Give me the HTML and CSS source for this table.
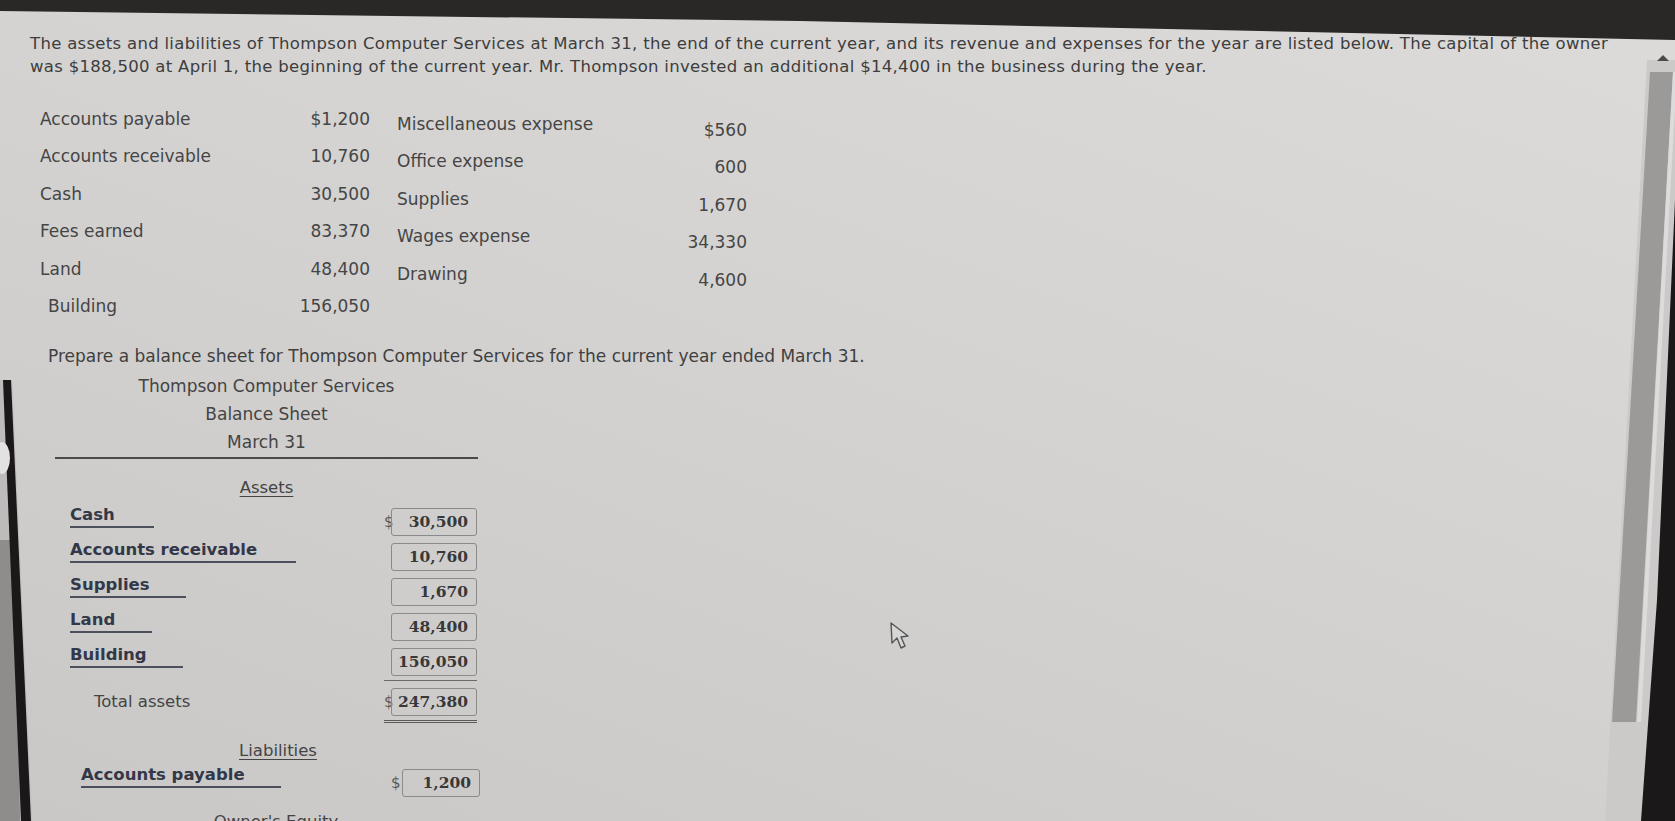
FILE: index.html
```html
<!DOCTYPE html>
<html lang="en">
<head>
<meta charset="utf-8">
<title>Thompson Computer Services - Balance Sheet</title>
<link rel="stylesheet" href="styles.css">
</head>
<body>
<div class="screen">
  <div class="content">
    <p class="intro">The assets and liabilities of Thompson Computer Services at March 31, the end of the current year, and its revenue and expenses for the year are listed below. The capital of the owner<br>was $188,500 at April 1, the beginning of the current year. Mr. Thompson invested an additional $14,400 in the business during the year.</p>

    <div class="data">
      <span class="dl">Accounts payable</span><span class="da">$1,200</span><span class="dl dl2">Miscellaneous expense</span><span class="da da2">$560</span>
      <span class="dl">Accounts receivable</span><span class="da">10,760</span><span class="dl dl2">Office expense</span><span class="da da2">600</span>
      <span class="dl">Cash</span><span class="da">30,500</span><span class="dl dl2">Supplies</span><span class="da da2">1,670</span>
      <span class="dl">Fees earned</span><span class="da">83,370</span><span class="dl dl2">Wages expense</span><span class="da da2">34,330</span>
      <span class="dl">Land</span><span class="da">48,400</span><span class="dl dl2">Drawing</span><span class="da da2">4,600</span>
      <span class="dl dl-b">Building</span><span class="da">156,050</span><span></span><span></span>
    </div>

    <p class="prompt">Prepare a balance sheet for Thompson Computer Services for the current year ended March 31.</p>

    <div class="sheet">
      <div class="sheet-head">
        <div>Thompson Computer Services</div>
        <div>Balance Sheet</div>
        <div>March 31</div>
      </div>

      <div class="sec-title">Assets</div>
      <div class="rows">
        <div class="row"><span class="acct w-cash">Cash</span><span class="cur">$</span><span class="box">30,500</span></div>
        <div class="row"><span class="acct w-ar">Accounts receivable</span><span class="cur"></span><span class="box">10,760</span></div>
        <div class="row"><span class="acct w-sup">Supplies</span><span class="cur"></span><span class="box">1,670</span></div>
        <div class="row"><span class="acct w-land">Land</span><span class="cur"></span><span class="box">48,400</span></div>
        <div class="row"><span class="acct w-bld">Building</span><span class="cur"></span><span class="box">156,050</span></div>
        <div class="row total">
          <span class="total-label">Total assets</span>
          <span class="tot-cell"><span class="cur">$</span><span class="box">247,380</span></span>
        </div>
      </div>

      <div class="liab">
        <div class="sec-title sec-liab">Liabilities</div>
        <div class="row row-ap"><span class="acct w-ap">Accounts payable</span><span class="cur">$</span><span class="box">1,200</span></div>
        <div class="sec-title sec-oe">Owner's Equity</div>
      </div>
    </div>
  </div>

  <svg class="topbar" width="1675" height="42" viewBox="0 0 1675 42" aria-hidden="true">
    <polygon points="0,0 1675,0 1675,40 800,21 0,11" fill="#2a2727"/>
  </svg>

  <svg class="left-edge" width="40" height="821" viewBox="0 0 40 821" aria-hidden="true">
    <polygon points="0,540 15,540 22,821 0,821" fill="#8e8d8c"/>
    <polygon points="0,380 12,380 32,821 20,821 15,540 0,540" fill="#bdbcbb"/>
    <polygon points="3,380 11,380 31,821 21,821" fill="#1c1819"/>
    <ellipse cx="2" cy="458" rx="8" ry="16" fill="#e2e2e2"/>
  </svg>

  <svg class="right-edge" width="90" height="821" viewBox="1585 0 90 821" aria-hidden="true">
    <polygon points="1647,60 1675,60 1675,821 1605,821" fill="#cbcac9"/>
    <polygon points="1650,72 1673,72 1636,722 1612,722" fill="#9b9a99"/>
    <polygon points="1637,722 1641,722 1677,72 1673,72" fill="#dcdcdc"/>
    <polygon points="1657,61 1669,61 1663,55" fill="#4a4a4a"/>
    <polygon points="1675,200 1675,821 1641,821 1657,600" fill="#1b1819"/>
  </svg>

  <svg class="cursor" width="24" height="32" viewBox="0 0 24 32" aria-hidden="true">
    <path d="M2 2 L3 22 L8 17 L12 27 L16 25 L12 16 L19 15 Z" fill="#d6d6d6" stroke="#555" stroke-width="1.4" stroke-linejoin="round"/>
  </svg>
</div>
</body>
</html>
```

FILE: styles.css
```css
* {
  box-sizing: border-box;
}

body {
  margin: 0;
  background: #d2d1d0;
  font-family: "DejaVu Sans", Verdana, sans-serif;
  color: #3f3f3f;
}

.screen {
  position: relative;
  width: 1675px;
  height: 821px;
  overflow: hidden;
  background: linear-gradient(200deg, #dcdbda 0%, #d4d3d2 45%, #c9c8c7 100%);
}

.content {
  padding: 32px 0 0 30px;
}

.intro {
  margin: 0;
  font-size: 16.5px;
  letter-spacing: 0.3px;
  line-height: 23px;
  white-space: nowrap;
  color: #3d3d3d;
}

.data {
  display: grid;
  grid-template-columns: 250px 80px 297px 80px;
  grid-auto-rows: 37.5px;
  align-items: center;
  margin: 22px 0 0 10px;
  font-size: 17px;
  color: #454545;
}

.da {
  text-align: right;
}

.dl2 {
  padding: 10px 0 0 27px;
}

.da2 {
  padding-top: 22px;
}

.dl-b {
  padding-left: 8px;
}

.prompt {
  margin: 20px 0 0 18px;
  font-size: 17px;
  line-height: 22px;
  color: #404040;
}

.sheet {
  width: 423px;
  margin: 5px 0 0 25px;
}

.sheet-head {
  text-align: center;
  font-size: 17px;
  line-height: 28px;
  padding-bottom: 1px;
  border-bottom: 2px solid #4a4a4a;
  color: #444;
}

.sec-title {
  margin-top: 18px;
  text-align: center;
  font-size: 16.5px;
  line-height: 22px;
  text-decoration: underline;
  text-underline-offset: 3px;
  color: #444;
}

.rows {
  margin-top: 5.5px;
}

.row {
  display: grid;
  grid-template-columns: 314px 7px 86px;
  height: 35px;
  align-items: center;
  padding-left: 15px;
}

.acct {
  align-self: start;
  justify-self: start;
  font-weight: bold;
  font-size: 16.5px;
  line-height: 19px;
  padding-bottom: 2px;
  border-bottom: 2px solid #4b505c;
  color: #333849;
  white-space: nowrap;
}

.w-cash { width: 84px; }
.w-ar { width: 226px; }
.w-sup { width: 116px; }
.w-land { width: 82px; }
.w-bld { width: 113px; }
.w-ap { width: 200px; margin-left: 4px; }

.cur {
  font-size: 15px;
  color: #5a5a5a;
  line-height: 28px;
}

.box {
  display: block;
  height: 28px;
  border: 1px solid #8a8a8a;
  border-radius: 3px;
  text-align: right;
  padding-right: 8px;
  font-family: "DejaVu Serif", Georgia, serif;
  font-weight: bold;
  font-size: 15.5px;
  line-height: 26px;
  color: #383838;
}

.row.total {
  height: auto;
}

.total-label {
  padding-left: 24px;
  font-size: 16.5px;
  color: #444;
}

.tot-cell {
  grid-column: 2 / 4;
  display: grid;
  grid-template-columns: 7px 86px;
  align-items: center;
  padding: 7px 0 4px;
  border-top: 1px solid #6a6a6a;
  border-bottom: 3px double #5a5a5a;
}

.liab {
  margin-left: 7px;
}

.sec-liab {
  margin-top: 17px;
  padding-left: 16px;
}

.row-ap {
  margin-top: 3.5px;
  grid-template-columns: 314px 11px 78px;
}

.sec-oe {
  margin-top: 11px;
  padding-left: 12px;
}

.topbar {
  position: absolute;
  left: 0;
  top: 0;
}

.left-edge {
  position: absolute;
  left: 0;
  top: 0;
}

.right-edge {
  position: absolute;
  right: 0;
  top: 0;
}

.cursor {
  position: absolute;
  left: 889px;
  top: 621px;
}
```
